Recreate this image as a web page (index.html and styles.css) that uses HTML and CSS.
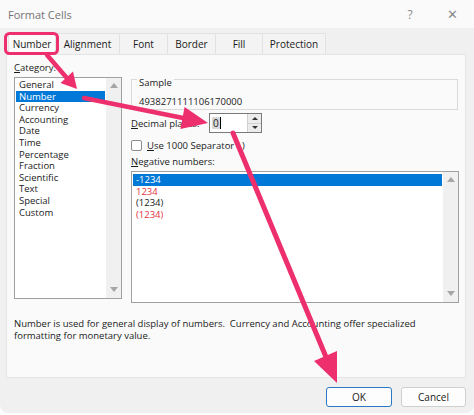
FILE: index.html
```html
<!DOCTYPE html>
<html>
<head>
<meta charset="utf-8">
<link rel="stylesheet" href="styles.css">
</head>
<body>
<div class="dialog">
  <div class="titlebar">
    <span class="title">Format Cells</span>
    <span class="help">?</span>
    <span class="close">✕</span>
  </div>
  <div class="tabs">
    <div class="tab active">Number</div>
    <div class="tab t-align">Alignment</div>
    <div class="tab t-font">Font</div>
    <div class="tab t-border">Border</div>
    <div class="tab t-fill">Fill</div>
    <div class="tab t-prot">Protection</div>
  </div>
  <div class="panel">
    <div class="panel-main">
      <div class="left-col">
        <div class="label"><u>C</u>ategory:</div>
        <div class="listbox cat-list">
          <div class="items">
            <div class="item">General</div>
            <div class="item selected">Number</div>
            <div class="item">Currency</div>
            <div class="item">Accounting</div>
            <div class="item">Date</div>
            <div class="item">Time</div>
            <div class="item">Percentage</div>
            <div class="item">Fraction</div>
            <div class="item">Scientific</div>
            <div class="item">Text</div>
            <div class="item">Special</div>
            <div class="item">Custom</div>
          </div>
          <div class="scrollbar">
            <span class="tri-up"></span>
            <span class="tri-down"></span>
          </div>
        </div>
      </div>
      <div class="right-col">
        <div class="sample">
          <span class="sample-label">Sample</span>
          <div class="sample-value">4938271111106170000</div>
        </div>
        <div class="decimal-row">
          <span class="dec-label"><u>D</u>ecimal places:</span>
          <div class="spin-input">
            <span class="spin-value"><span class="sel">0</span><span class="caret"></span></span>
            <div class="spin-btns">
              <div class="spin-btn"><span class="tri-up small"></span></div>
              <div class="spin-btn"><span class="tri-down small"></span></div>
            </div>
          </div>
        </div>
        <div class="check-row">
          <span class="checkbox"></span>
          <span><u>U</u>se 1000 Separator (,)</span>
        </div>
        <div class="label neg-label"><u>N</u>egative numbers:</div>
        <div class="listbox neg-list">
          <div class="items">
            <div class="item selected">-1234</div>
            <div class="item red">1234</div>
            <div class="item">(1234)</div>
            <div class="item red">(1234)</div>
          </div>
          <div class="scrollbar">
            <span class="tri-up"></span>
            <span class="tri-down"></span>
          </div>
        </div>
      </div>
    </div>
    <div class="desc">Number is used for general display of numbers.&nbsp; Currency and Accounting offer specialized<br>formatting for monetary value.</div>
  </div>
  <div class="buttons">
    <div class="btn default">OK</div>
    <div class="btn">Cancel</div>
  </div>
</div>
<svg class="overlay" width="474" height="415" viewBox="0 0 474 415">
  <rect x="5.5" y="33.5" width="52" height="20" rx="4" ry="4" fill="none" stroke="#ee2f6d" stroke-width="3"/>
  <line x1="47" y1="55" x2="66" y2="77" stroke="#ee2f6d" stroke-width="4.5" stroke-linecap="round"/>
  <polygon points="77,89 60.5,83 73,71.5" fill="#ee2f6d"/>
  <line x1="84" y1="98" x2="183" y2="118" stroke="#ee2f6d" stroke-width="4.5" stroke-linecap="round"/>
  <polygon points="208,123 184.6,107 180.4,129" fill="#ee2f6d"/>
  <line x1="233" y1="133" x2="326" y2="357" stroke="#ee2f6d" stroke-width="5" stroke-linecap="round"/>
  <polygon points="337,383 314,361 337,351" fill="#ee2f6d"/>
</svg>
</body>
</html>
```

FILE: styles.css
```css
* { box-sizing: border-box; }
html, body {
  margin: 0;
  padding: 0;
  background: #ffffff;
}
body {
  font-family: "Open Sans", "Noto Sans", "Liberation Sans", sans-serif;
  font-size: 9.5px;
  color: #1a1a1a;
  width: 474px;
  height: 415px;
  overflow: hidden;
  position: relative;
}
.dialog {
  width: 474px;
  height: 413px;
  background: #f0f0f0;
  border-radius: 0 0 8px 8px;
  display: flex;
  flex-direction: column;
}
.titlebar {
  height: 28px;
  background: #fafafa;
  display: flex;
  align-items: center;
  padding-left: 8px;
  color: #737373;
  font-size: 11px;
}
.title { flex: 1; }
.help {
  width: 20px;
  margin-right: 22px;
  text-align: center;
  font-size: 12px;
  color: #8a8a8a;
}
.close {
  width: 20px;
  margin-right: 12px;
  text-align: center;
  font-size: 13px;
  color: #8a8a8a;
}
.tabs {
  margin-top: 5px;
  height: 21px;
  padding-left: 8px;
  display: flex;
  align-items: stretch;
}
.tab {
  background: #f3f3f3;
  border: 1px solid #e2e2e2;
  border-bottom: none;
  margin-left: -1px;
  display: flex;
  align-items: center;
  justify-content: center;
  font-size: 10px;
  color: #1a1a1a;
}
.tab.active {
  background: #fafafa;
  width: 48px;
  margin-left: 0;
}
.t-align { width: 65px; }
.t-font { width: 49px; }
.t-border { width: 49px; }
.t-fill { width: 48px; }
.t-prot { width: 64px; }
.panel {
  margin: 0 8px 0 6px;
  height: 324px;
  background: #fafafa;
  border: 1px solid #e4e4e4;
  padding: 7px 5px 0 7px;
}
.panel-main {
  display: flex;
  gap: 9px;
}
.left-col { width: 108px; }
.right-col {
  width: 328px;
  display: flex;
  flex-direction: column;
}
.label {
  height: 12px;
  line-height: 12px;
}
.left-col .label { margin-bottom: 3px; }
.listbox {
  background: #ffffff;
  border: 1px solid #a0a0a0;
  display: flex;
}
.cat-list { height: 222px; }
.items {
  flex: 1;
  padding: 1px 1px 0 1px;
}
.item {
  height: 11.6px;
  line-height: 11.6px;
  padding-left: 3px;
  white-space: nowrap;
}
.item.selected {
  background: #0078d7;
  color: #ffffff;
}
.item.red { color: #e3323c; }
.scrollbar {
  width: 15px;
  background: #f0f0f0;
  display: flex;
  flex-direction: column;
  justify-content: space-between;
  align-items: center;
  padding: 5px 0 6px;
}
.tri-up {
  width: 0;
  height: 0;
  border-left: 4px solid transparent;
  border-right: 4px solid transparent;
  border-bottom: 5px solid #a5a5a5;
}
.tri-down {
  width: 0;
  height: 0;
  border-left: 4px solid transparent;
  border-right: 4px solid transparent;
  border-top: 5px solid #a5a5a5;
}
.tri-up.small {
  border-left-width: 3px;
  border-right-width: 3px;
  border-bottom: 3px solid #333;
}
.tri-down.small {
  border-left-width: 3px;
  border-right-width: 3px;
  border-top: 3px solid #333;
}
.sample {
  margin-top: 17px;
  width: 327px;
  height: 31px;
  border: 1px solid #dadada;
  padding-left: 7px;
}
.sample-label {
  display: inline-block;
  margin-top: -3px;
  margin-left: -2px;
  padding: 0 2px;
  background: #fafafa;
  height: 12px;
  line-height: 12px;
  vertical-align: top;
}
.sample-value {
  line-height: 12px;
  margin-top: 3px;
}
.decimal-row {
  margin-top: 3px;
  height: 20px;
  display: flex;
  align-items: center;
}
.dec-label { width: 78px; }
.spin-input {
  width: 53px;
  height: 20px;
  border: 1px solid #7a7a7a;
  background: #ffffff;
  display: flex;
  align-items: center;
  padding-left: 2px;
}
.spin-value {
  flex: 1;
  display: flex;
  align-items: center;
  font-size: 10px;
}
.sel {
  background: #d8d8d8;
  padding: 0 1px;
  line-height: 12px;
}
.caret {
  width: 1px;
  height: 12px;
  background: #000;
}
.spin-btns {
  width: 14px;
  height: 18px;
  display: flex;
  flex-direction: column;
  border-left: 1px solid #d0d0d0;
}
.spin-btn {
  flex: 1;
  background: #ececec;
  display: flex;
  align-items: center;
  justify-content: center;
}
.spin-btn + .spin-btn { border-top: 1px solid #d0d0d0; }
.check-row {
  margin-top: 6px;
  height: 12px;
  display: flex;
  align-items: center;
  gap: 5px;
}
.checkbox {
  width: 11px;
  height: 11px;
  border: 1px solid #8c8c8c;
  border-radius: 2px;
  background: #fff;
}
.neg-label { margin-top: 5px; }
.neg-list {
  margin-top: 3px;
  height: 132px;
  width: 328px;
}
.neg-list .items { padding-top: 2px; }
.desc {
  margin-top: 15px;
  line-height: 12px;
}
.buttons {
  margin-top: 9px;
  display: flex;
  justify-content: flex-end;
  gap: 9px;
  padding-right: 8px;
}
.btn {
  width: 65px;
  height: 20px;
  border: 1px solid #cfcfcf;
  border-radius: 3px;
  background: #fdfdfd;
  display: flex;
  align-items: center;
  justify-content: center;
  font-size: 10px;
}
.btn.default {
  width: 66px;
  border: 1px solid #2a78c4;
}
.overlay {
  position: absolute;
  left: 0;
  top: 0;
  pointer-events: none;
}
```
